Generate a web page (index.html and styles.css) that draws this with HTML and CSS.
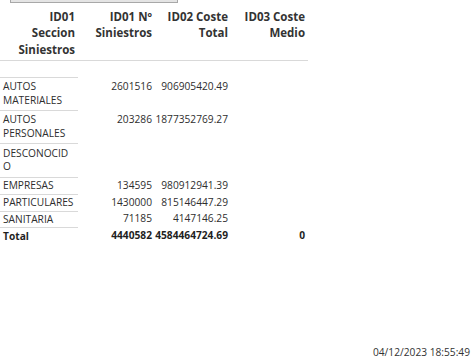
FILE: index.html
```html
<!DOCTYPE html>
<html lang="es">
<head>
<meta charset="utf-8">
<title>Informe Siniestros</title>
<link rel="stylesheet" href="styles.css">
</head>
<body>
<div class="page">
  <div class="toolbar"></div>
  <div class="grid">
    <div class="th">ID01 Seccion Siniestros</div>
    <div class="th">ID01 Nº Siniestros</div>
    <div class="th">ID02 Coste Total</div>
    <div class="th">ID03 Coste Medio</div>
    <div class="spacer"></div>

    <div class="td name r2">AUTOS MATERIALES</div>
    <div class="td num r2">2601516</div>
    <div class="td num r2">906905420.49</div>
    <div class="td num r2"></div>

    <div class="td name r2">AUTOS PERSONALES</div>
    <div class="td num r2">203286</div>
    <div class="td num r2">1877352769.27</div>
    <div class="td num r2"></div>

    <div class="td name r3">DESCONOCIDO</div>
    <div class="td num r3"></div>
    <div class="td num r3"></div>
    <div class="td num r3"></div>

    <div class="td name r1">EMPRESAS</div>
    <div class="td num r1">134595</div>
    <div class="td num r1">980912941.39</div>
    <div class="td num r1"></div>

    <div class="td name r1">PARTICULARES</div>
    <div class="td num r1">1430000</div>
    <div class="td num r1">815146447.29</div>
    <div class="td num r1"></div>

    <div class="td name r4">SANITARIA</div>
    <div class="td num r4">71185</div>
    <div class="td num r4">4147146.25</div>
    <div class="td num r4"></div>

    <div class="td name total r5">Total</div>
    <div class="td num total r5">4440582</div>
    <div class="td num total r5">4584464724.69</div>
    <div class="td num total r5">0</div>
  </div>
  <div class="footer">04/12/2023 18:55:49</div>
</div>
</body>
</html>
```
FILE: styles.css
```css
html, body {
  margin: 0;
  padding: 0;
  background: #ffffff;
}

.page {
  width: 474px;
  height: 358px;
  display: flex;
  flex-direction: column;
  overflow: hidden;
  font-family: "Open Sans", "Noto Sans", sans-serif;
  color: #333333;
}

.toolbar {
  margin-left: 10px;
  width: 166px;
  height: 2px;
  background: #e4e4e4;
  border: 1px solid #a8a8a8;
  border-top: none;
}

.grid {
  display: grid;
  grid-template-columns: 78px 77px 76px 77px;
  width: 308px;
}

.th {
  font-size: 11.5px;
  line-height: 16.3px;
  font-weight: 700;
  color: #333333;
  text-align: right;
  padding: 6px 3px 2px 3px;
  border-bottom: 1px solid #d9d9d9;
}

.th:first-child {
  padding-left: 10px;
}

.spacer {
  grid-column: 1 / -1;
  height: 16px;
}

.td {
  box-sizing: border-box;
  display: flex;
  align-items: center;
  font-size: 10.2px;
  line-height: 13.4px;
  padding: 0 3px;
  color: #2e2e2e;
}

.name {
  border-top: 1px solid #d9d9d9;
  padding-right: 4px;
  overflow-wrap: anywhere;
}

.num {
  justify-content: flex-end;
  text-align: right;
}

.num.r2 {
  align-items: flex-start;
  padding-top: 3.6px;
}

.num.r3 {
  align-items: flex-start;
  padding-top: 4.1px;
}

.total {
  font-weight: 700;
  color: #1f1f1f;
}

.r1 { height: 17px; }
.r2 { height: 33px; }
.r3 { height: 34px; }
.r4 { height: 16px; }
.r5 { height: 18px; }

.footer {
  margin-top: auto;
  align-self: flex-end;
  padding-right: 4px;
  font-size: 10.2px;
  line-height: 11px;
  color: #333333;
}
```
